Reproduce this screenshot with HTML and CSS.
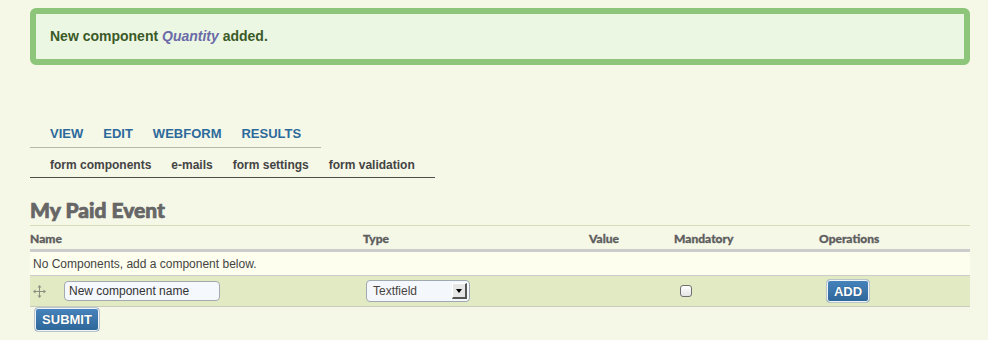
FILE: index.html
```html
<!DOCTYPE html>
<html>
<head>
<meta charset="utf-8">
<link rel="stylesheet" href="styles.css">
</head>
<body>
<div class="page">
  <div class="messages">New component <em>Quantity</em> added.</div>
  <ul class="tabs primary">
    <li><a href="#">VIEW</a></li>
    <li><a href="#">EDIT</a></li>
    <li><a href="#">WEBFORM</a></li>
    <li><a href="#">RESULTS</a></li>
  </ul>
  <ul class="tabs secondary">
    <li><a href="#">form components</a></li>
    <li><a href="#">e-mails</a></li>
    <li><a href="#">form settings</a></li>
    <li><a href="#">form validation</a></li>
  </ul>
  <h1 class="title">My Paid Event</h1>
  <table class="components">
    <colgroup>
      <col class="c-name"><col class="c-type"><col class="c-value"><col class="c-mand"><col class="c-ops">
    </colgroup>
    <thead>
      <tr><th>Name</th><th>Type</th><th>Value</th><th>Mandatory</th><th>Operations</th></tr>
    </thead>
    <tbody>
      <tr class="empty"><td colspan="5">No Components, add a component below.</td></tr>
      <tr class="add-row">
        <td>
          <div class="name-cell">
            <svg class="drag" width="13" height="13" viewBox="0 0 13 13" aria-hidden="true">
              <g fill="none" stroke="#8a8f80" stroke-width="1">
                <path d="M6.5 1.5V11.5M1.5 6.5H11.5"/>
              </g>
              <g fill="#8a8f80">
                <path d="M6.5 0L4.5 2.5H8.5Z"/>
                <path d="M6.5 13L4.5 10.5H8.5Z"/>
                <path d="M0 6.5L2.5 4.5V8.5Z"/>
                <path d="M13 6.5L10.5 4.5V8.5Z"/>
              </g>
            </svg>
            <input class="text-input" type="text" value="New component name">
          </div>
        </td>
        <td>
          <div class="select"><span class="select-label">Textfield</span><span class="select-arrow"></span></div>
        </td>
        <td></td>
        <td><input class="check" type="checkbox"></td>
        <td><button class="btn add">ADD</button></td>
      </tr>
    </tbody>
  </table>
  <button class="btn submit">SUBMIT</button>
</div>
</body>
</html>
```
FILE: styles.css
```css
html, body {
  margin: 0;
  padding: 0;
  background: #f5f7e7;
}
body {
  font-family: "Liberation Sans", Arial, sans-serif;
  font-size: 12px;
  color: #444;
}
.page {
  padding: 8px 18px 0 30px;
}
.messages {
  border: 6px solid #8dc57a;
  border-radius: 6px;
  background: #ecf7e3;
  padding: 14px 14px;
  line-height: 17px;
  font-size: 14px;
  font-weight: bold;
  color: #3b5a27;
}
.messages em {
  color: #6b6aa8;
  font-style: italic;
}
.tabs {
  list-style: none;
  margin: 0;
  display: flex;
  width: fit-content;
  padding: 0 10px;
}
.tabs li {
  padding: 0 10px;
}
.tabs a {
  text-decoration: none;
  font-weight: bold;
}
.primary {
  margin-top: 61px;
  line-height: 16px;
  font-size: 13px;
  padding-bottom: 5px;
  border-bottom: 1px solid #b6b8a8;
}
.primary a {
  color: #2d6a9c;
}
.secondary {
  padding-top: 10px;
  padding-bottom: 4px;
  line-height: 15px;
  font-size: 12px;
  border-bottom: 1px solid #4e4e4a;
}
.secondary a {
  color: #444;
}
.title {
  margin: 20px 0 0;
  padding-bottom: 3px;
  border-bottom: 1px solid #d8dcb6;
  font-family: Lato, "Open Sans", sans-serif;
  font-weight: 900;
  font-size: 21px;
  line-height: 24px;
  color: #666;
  -webkit-text-stroke: 0.7px #666;
}
.components {
  width: 100%;
  table-layout: fixed;
  border-collapse: collapse;
}
.c-name { width: 333px; }
.c-type { width: 226px; }
.c-value { width: 85px; }
.c-mand { width: 145px; }
.c-ops { width: 151px; }
.components th {
  text-align: left;
  padding: 0 0 3px;
  height: 20px;
  vertical-align: bottom;
  font-family: Lato, "Open Sans", sans-serif;
  font-weight: 900;
  font-size: 12px;
  line-height: 14px;
  color: #5e5e5e;
  -webkit-text-stroke: 0.3px #5e5e5e;
  border-bottom: 3px solid #cccccc;
}
.components td {
  padding: 0 3px;
  vertical-align: middle;
}
.empty td {
  height: 23px;
  background: #fdfeee;
  border-bottom: 1px solid #cccccc;
  color: #444;
}
.add-row td {
  height: 30px;
  background: #e2eac3;
  border-bottom: 1px solid #c8cbbd;
}
.name-cell {
  display: flex;
  align-items: center;
  gap: 18px;
}
.drag {
  display: block;
  flex: none;
}
.text-input {
  box-sizing: border-box;
  width: 156px;
  height: 20px;
  margin: 0;
  padding: 0 4px;
  border: 1px solid #a3a9ae;
  border-radius: 4px;
  background: #f5f8fc;
  font-family: "Liberation Sans", Arial, sans-serif;
  font-size: 12px;
  color: #333;
}
.select {
  box-sizing: border-box;
  width: 104px;
  height: 22px;
  display: flex;
  align-items: center;
  justify-content: space-between;
  padding: 0 2px 0 6px;
  border: 1px solid #a0a8b0;
  border-radius: 4px;
  background: #f4f8fc;
}
.select-label {
  font-size: 12px;
  color: #4a4440;
}
.select-arrow {
  position: relative;
  box-sizing: border-box;
  width: 15px;
  height: 16px;
  background: #e6e6e6;
  border-top: 1px solid #fff;
  border-left: 1px solid #fff;
  border-right: 2px solid #555;
  border-bottom: 2px solid #555;
}
.select-arrow::after {
  content: "";
  position: absolute;
  left: 3px;
  top: 5px;
  border-left: 3px solid transparent;
  border-right: 3px solid transparent;
  border-top: 4px solid #000;
}
.check {
  appearance: none;
  -webkit-appearance: none;
  display: block;
  box-sizing: border-box;
  width: 12px;
  height: 12px;
  margin: 0 0 0 3px;
  border: 1px solid #6f6f6f;
  border-radius: 3px;
  background: linear-gradient(#ffffff, #e4e4e4);
}
.btn {
  box-sizing: border-box;
  border: 1px solid #b9c4cb;
  border-radius: 4px;
  box-shadow: inset 0 0 0 1px #f0f4f6;
  background: linear-gradient(#4784bd, #2d6698);
  color: #fff;
  font-family: "Liberation Sans", Arial, sans-serif;
  font-weight: bold;
  font-size: 13px;
  text-shadow: 0 0 1px #1e4a70;
  padding: 0;
  cursor: pointer;
}
.add {
  display: block;
  width: 44px;
  height: 24px;
  margin-left: 4px;
}
.submit {
  display: block;
  width: 66px;
  height: 25px;
  margin: 0 0 0 4px;
}
```
